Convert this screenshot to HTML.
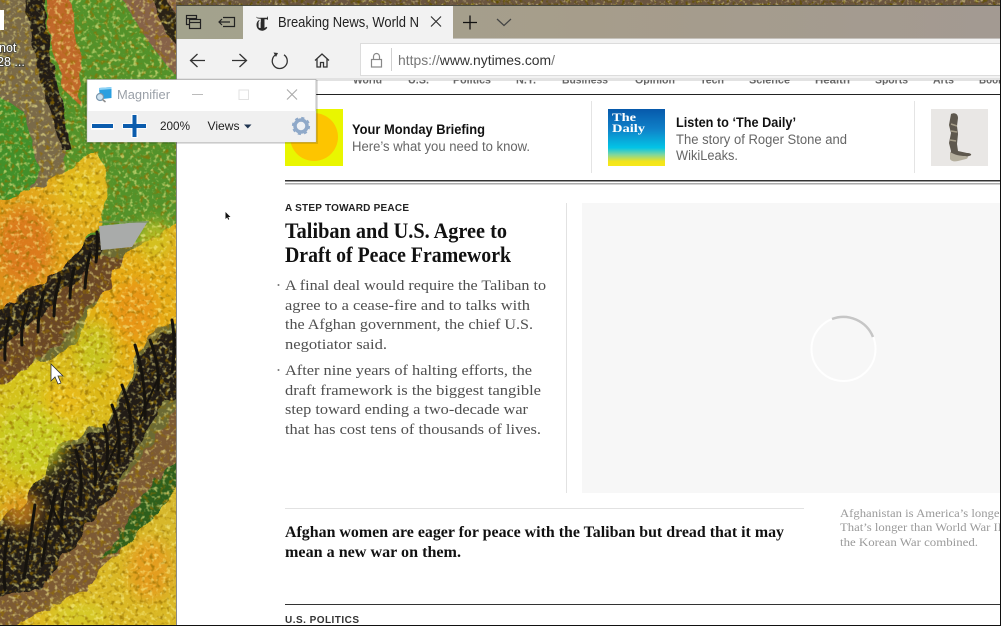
<!DOCTYPE html>
<html><head><meta charset="utf-8"><title>Magnifier</title>
<style>
html,body{margin:0;padding:0;width:1001px;height:626px;overflow:hidden;background:#fff}
svg{display:block;filter:blur(.3px)}
.s{font-family:"Liberation Sans",sans-serif}
.f{font-family:"Liberation Serif",serif}
</style></head><body>
<svg width="1001" height="626" viewBox="0 0 1001 626" xmlns="http://www.w3.org/2000/svg">
<defs>
<filter id="rough" x="-5%" y="-5%" width="110%" height="110%">
<feTurbulence type="fractalNoise" baseFrequency="0.06" numOctaves="2" seed="4" result="n"/>
<feDisplacementMap in="SourceGraphic" in2="n" scale="12"/>
</filter>
<filter id="soft" x="-20%" y="-20%" width="140%" height="140%"><feGaussianBlur stdDeviation="7"/></filter>
<filter id="dk" x="0" y="0" width="100%" height="100%">
<feTurbulence type="fractalNoise" baseFrequency="0.2" numOctaves="2" seed="8"/>
<feColorMatrix values="0 0 0 0 .3  0 0 0 0 .16  0 0 0 0 0  4 0 0 0 -2.15"/>
</filter>
<filter id="lt" x="0" y="0" width="100%" height="100%">
<feTurbulence type="fractalNoise" baseFrequency="0.24" numOctaves="2" seed="21"/>
<feColorMatrix values="0 0 0 0 1  0 0 0 0 .93  0 0 0 0 .3  0 4 0 0 -2.1"/>
</filter>
<filter id="dk2" x="0" y="0" width="100%" height="100%">
<feTurbulence type="fractalNoise" baseFrequency="0.28" numOctaves="2" seed="8"/>
<feColorMatrix values="0 0 0 0 .12  0 0 0 0 .08  0 0 0 0 0  3.6 0 0 0 -1.85"/>
</filter>
<filter id="lt2" x="0" y="0" width="100%" height="100%">
<feTurbulence type="fractalNoise" baseFrequency="0.32" numOctaves="2" seed="21"/>
<feColorMatrix values="0 0 0 0 1  0 0 0 0 .9  0 0 0 0 .35  0 3.4 0 0 -1.8"/>
</filter>
<linearGradient id="h1" x1="0" y1="1" x2="1" y2="0"><stop offset="0" stop-color="#dc8a1c"/><stop offset=".55" stop-color="#e3a51a"/><stop offset="1" stop-color="#e0bd22"/></linearGradient>
<linearGradient id="h2" x1="0" y1="1" x2="1" y2="0"><stop offset="0" stop-color="#d9b31a"/><stop offset=".35" stop-color="#d3c41e"/><stop offset=".65" stop-color="#e6ab14"/><stop offset="1" stop-color="#e3ad1e"/></linearGradient>
<linearGradient id="h3" x1="0" y1="1" x2="1" y2="0"><stop offset="0" stop-color="#e0bb1e"/><stop offset="1" stop-color="#d4b630"/></linearGradient>
<linearGradient id="tabbar" x1="0" x2="1"><stop offset="0" stop-color="#a3a38d"/><stop offset=".5" stop-color="#a69d8b"/><stop offset="1" stop-color="#a39a92"/></linearGradient>
<linearGradient id="daily" x1="0" y1="0" x2="0" y2="1"><stop offset="0" stop-color="#0759ab"/><stop offset=".35" stop-color="#0f80c8"/><stop offset=".68" stop-color="#03c4e6"/><stop offset=".8" stop-color="#7ed6a0"/><stop offset=".92" stop-color="#f2e41c"/><stop offset="1" stop-color="#f7e81a"/></linearGradient>
<clipPath id="left"><rect x="0" y="0" width="176" height="626"/></clipPath>
<clipPath id="top"><rect x="0" y="0" width="1001" height="6"/></clipPath>
<clipPath id="nav"><rect x="340" y="80" width="661" height="5"/></clipPath>
</defs>

<!-- wallpaper -->
<g clip-path="url(#left)">
<rect width="176" height="626" fill="#6b6a34"/>
<g filter="url(#rough)">
<rect x="-20" y="-20" width="220" height="260" fill="#52922c"/>
<polygon points="-20,-20 30,-20 66,150 60,215 10,215 -20,100" fill="#7a6a4a"/>
<polygon points="-20,85 22,110 38,165 26,215 -20,215" fill="#43902a"/>
<polygon points="112,-20 200,-20 200,80 172,72 140,30" fill="#86624a"/>
<polygon points="46,-20 64,-20 82,60 80,105 64,90 50,40" fill="#c0682c"/>
<polygon points="22,-20 44,-20 50,55 72,150 62,150 36,65" fill="#241c12"/>
<polygon points="143,-20 155,-20 190,40 190,60 165,32" fill="#2a2018"/>
<polygon points="-20,320 105,228 102,262 -20,375" fill="#241c12"/>
<polygon points="-20,370 100,258 135,258 60,340 -20,410" fill="#6b4628"/>
<polygon points="-20,205 30,192 98,152 110,190 100,226 60,268 20,298 -20,320" fill="url(#h1)"/>
<polygon points="-20,530 60,450 105,430 150,345 200,310 200,395 165,400 125,470 95,530 40,600 0,605 -20,605" fill="#241c12"/>
<polygon points="-20,600 40,590 130,470 200,380 200,640 -20,640" fill="#7b5a34"/>
<polygon points="100,560 145,495 200,432 200,470 140,540" fill="#2f5f1c"/>
<polygon points="-20,398 30,365 75,345 100,295 130,250 200,212 200,305 150,335 105,425 60,445 20,505 -20,540" fill="url(#h2)"/>
<polygon points="-20,640 15,626 80,590 125,548 200,470 200,640" fill="url(#h3)"/>
</g>
<!-- colour blotches -->
<g filter="url(#soft)" opacity=".75">
<ellipse cx="25" cy="245" rx="28" ry="38" fill="#d9701c"/>
<ellipse cx="80" cy="190" rx="22" ry="18" fill="#e3c41e"/>
<ellipse cx="30" cy="440" rx="35" ry="35" fill="#c2cf22"/>
<ellipse cx="95" cy="350" rx="20" ry="28" fill="#bfc922"/>
<ellipse cx="135" cy="310" rx="22" ry="30" fill="#e88f18"/>
<ellipse cx="155" cy="240" rx="18" ry="20" fill="#cfc824"/>
<ellipse cx="65" cy="400" rx="22" ry="20" fill="#ecb814"/>
<ellipse cx="20" cy="510" rx="20" ry="18" fill="#dd8c1a"/>
<ellipse cx="150" cy="570" rx="22" ry="30" fill="#e8951c"/>
<ellipse cx="80" cy="615" rx="30" ry="12" fill="#d2cf2a"/>
</g>
<rect width="176" height="626" filter="url(#dk)" opacity=".7"/>
<rect width="176" height="626" filter="url(#lt)" opacity=".55"/>
<!-- stalks -->
<g fill="none" stroke="#15120d" stroke-linecap="round" stroke-width="3">
<path d="M5 360 Q4 340 9 318M22 345 Q20 325 29 303M38 332 Q38 312 44 292M54 316 Q54 298 60 278M70 298 Q70 285 74 268M85 288 Q86 270 90 253M96 262 Q98 245 97 232"/>
<path d="M5 590 Q2 560 9 530M24 578 Q30 540 35 505M42 565 Q48 525 56 490M62 525 Q60 500 70 480M80 505 Q84 475 76 450M95 485 Q98 455 88 435M106 468 Q110 445 104 425M118 462 Q122 430 112 405M130 448 Q134 415 122 385M145 418 Q146 380 135 345M158 390 Q160 365 150 340M172 372 Q176 345 172 320"/>
<path d="M68 538 Q56 520 50 500M100 480 Q110 460 118 440M140 420 Q150 395 160 375" stroke-width="2"/>
</g>
<polygon points="99,226 148,221 132,247 101,250" fill="#a9abaa"/>
<rect x="99" y="221" width="50" height="2" fill="#6f8f50" opacity=".6"/>
<rect x="0" y="10" width="4" height="20" fill="#fff"/>
<text x="-1" y="52" class="s" font-size="12.500" fill="#fff" stroke="#123" stroke-width="2" paint-order="stroke" stroke-opacity=".45">not</text>
<text x="-3" y="66" class="s" font-size="12.500" fill="#fff" stroke="#123" stroke-width="2" paint-order="stroke" stroke-opacity=".45">28 ...</text>
<path d="M51 364 V381 L55 377 L58 384 L61 383 L58 376 L63 376 Z" fill="#fff" stroke="#333" stroke-width=".8"/>
</g>
<g clip-path="url(#top)">
<rect x="176" y="0" width="825" height="6" fill="#6a5540"/>
<rect x="176" y="0" width="825" height="6" filter="url(#dk2)"/>
<rect x="176" y="0" width="825" height="6" filter="url(#lt2)" opacity=".5"/>
</g>

<!-- browser -->
<rect x="176" y="5" width="825" height="621" fill="#fff"/>
<rect x="176" y="5" width="825" height="1" fill="#4a4a3e"/>
<rect x="176" y="6" width="825" height="33" fill="url(#tabbar)"/>
<rect x="243" y="6" width="210" height="33" fill="#f2f2f2"/>
<rect x="176" y="39" width="825" height="39" fill="#f2f2f2"/>
<rect x="453" y="38" width="548" height="1" fill="#d8d8d8" opacity=".6"/>
<rect x="360.500" y="43.500" width="641" height="32" fill="#fff" stroke="#dcdcdc"/>
<rect x="176" y="78" width="825" height="3" fill="#e2e2e2"/>
<rect x="176" y="5" width="1" height="621" fill="#555" opacity=".7"/>

<!-- tab bar icons -->
<g fill="none" stroke="#222" stroke-width="1.2">
<rect x="186.500" y="15.500" width="10" height="9"/>
<path d="M186.500 18.500H196.500"/>
<rect x="189.500" y="19.500" width="11" height="9" fill="#a3a38d"/>
<path d="M189.500 22.500H200.500"/>
<path d="M223 17.500H234.500V26.500H223M230 22H219M222 19l-3 3 3 3"/>
</g>
<g fill="#2a2a2a">
<path d="M256 16.500c1 1.500 2.500 1.200 5 1.200h6l1-1.700v4l-1.200-.8h-2.300v8.800l2-1.300.8 1c-1.400 1.800-3 3-5.300 3-3.300 0-5.500-2.600-5.500-5.800 0-2.300 1-4 2.800-5l.2.800c-.8.800-1.100 1.800-1.100 2.900l2.400-1.100v-3.800c-2.400 0-4.200 0-4.800-2.200z M260.600 22.500l-2 .9v3.800c.5.500 1.200.8 2 .8z"/>
</g>
<text x="278" y="27" class="s" font-size="14.500" fill="#222" textLength="141" lengthAdjust="spacingAndGlyphs">Breaking News, World N</text>
<rect x="419" y="10" width="10" height="24" fill="#f2f2f2"/>
<path d="M431 16.500l10 10M441 16.500l-10 10" stroke="#333" stroke-width="1.200" fill="none"/>
<path d="M470 15.500v14M463 22.500h14" stroke="#111" stroke-width="1.300" fill="none"/>
<path d="M497 19l7 6.500 7-6.500" stroke="#444" stroke-width="1.200" fill="none"/>

<!-- nav icons -->
<g fill="none" stroke="#333" stroke-width="1.300">
<path d="M205 60.500H191M197.500 54l-7 6.500 7 6.500"/>
<path d="M232 60.500H246M239.500 54l7 6.500-7 6.500"/>
<path d="M276 54.500a7.500 7.500 0 1 0 8 .3"/>
<path d="M315 60.500l7-6.500 7 6.500M317 59v8h3.500v-4.500h3V67H327v-8"/>
</g>
<path d="M273.500 52.500l4.500 .5-2 4z" fill="#333"/>
<g fill="none" stroke="#888" stroke-width="1.200">
<rect x="371.500" y="59.500" width="10" height="7.500"/>
<path d="M373.500 59.500v-3a3 3 0 0 1 6 0v3"/>
</g>
<rect x="391" y="48" width="1" height="23" fill="#d0d0d0"/>
<text x="398" y="65" class="s" font-size="14" fill="#777" textLength="157" lengthAdjust="spacingAndGlyphs">https://<tspan fill="#333">www.nytimes.com</tspan>/</text>

<!-- nav cropped text -->
<g clip-path="url(#nav)" class="s" font-size="11" font-weight="bold" fill="#666">
<text x="353" y="83.500" textLength="29" lengthAdjust="spacingAndGlyphs">World</text>
<text x="408" y="83.500" textLength="21" lengthAdjust="spacingAndGlyphs">U.S.</text>
<text x="453" y="83.500" textLength="38" lengthAdjust="spacingAndGlyphs">Politics</text>
<text x="516" y="83.500" textLength="20" lengthAdjust="spacingAndGlyphs">N.Y.</text>
<text x="562" y="83.500" textLength="46" lengthAdjust="spacingAndGlyphs">Business</text>
<text x="635" y="83.500" textLength="40" lengthAdjust="spacingAndGlyphs">Opinion</text>
<text x="700" y="83.500" textLength="24" lengthAdjust="spacingAndGlyphs">Tech</text>
<text x="749" y="83.500" textLength="41" lengthAdjust="spacingAndGlyphs">Science</text>
<text x="815" y="83.500" textLength="35" lengthAdjust="spacingAndGlyphs">Health</text>
<text x="875" y="83.500" textLength="33" lengthAdjust="spacingAndGlyphs">Sports</text>
<text x="933" y="83.500" textLength="21" lengthAdjust="spacingAndGlyphs">Arts</text>
<text x="979" y="83.500" textLength="30" lengthAdjust="spacingAndGlyphs">Books</text>
</g>

<!-- page -->
<rect x="285" y="94" width="716" height="1" fill="#222"/>
<rect x="591" y="101" width="1" height="72" fill="#e4e4e4"/>
<rect x="914" y="101" width="1" height="72" fill="#e4e4e4"/>
<rect x="285" y="109" width="58" height="57" fill="#e9f600"/>
<circle cx="314" cy="137" r="24" fill="#fdc500"/>
<text x="352" y="134" class="s" font-size="13.500" font-weight="bold" fill="#111" textLength="133" lengthAdjust="spacingAndGlyphs">Your Monday Briefing</text>
<text x="352" y="151" class="s" font-size="13.500" fill="#666" textLength="178" lengthAdjust="spacingAndGlyphs">Here’s what you need to know.</text>
<rect x="608" y="109" width="57" height="57" fill="url(#daily)"/>
<text x="612" y="121" class="f" font-size="12" font-weight="bold" fill="#fff" textLength="24" lengthAdjust="spacingAndGlyphs">The</text>
<text x="612" y="132" class="f" font-size="12" font-weight="bold" fill="#fff" textLength="33" lengthAdjust="spacingAndGlyphs">Daily</text>
<text x="676" y="127" class="s" font-size="13.500" font-weight="bold" fill="#111" textLength="120" lengthAdjust="spacingAndGlyphs">Listen to ‘The Daily’</text>
<text x="676" y="144" class="s" font-size="13.500" fill="#666" textLength="171" lengthAdjust="spacingAndGlyphs">The story of Roger Stone and</text>
<text x="676" y="160" class="s" font-size="13.500" fill="#666" textLength="62" lengthAdjust="spacingAndGlyphs">WikiLeaks.</text>
<rect x="931" y="109" width="57" height="57" fill="#e9e7e5"/>
<path d="M951 114c4-2 7 0 7 4l-1 8 1 8-1 10 1 7 9 2c4 0 6 2 2 3l-9 3c-4 1-8 1-10-2l1-6-2-8 2-10-2-8z" fill="#5e584e"/>
<path d="M950 152c5 3 10 4 15 4 3 0 4 2 1 3l-8 2c-4 1-7 0-8-2z" fill="#b5af9e"/>
<path d="M951 124l6 2M951 131l6 1M950 140l6 1" stroke="#a49c88" stroke-width="1.500"/>
<rect x="285" y="180" width="716" height="1.500" fill="#333"/>
<rect x="285" y="183" width="716" height="1.500" fill="#aaa"/>

<text x="285" y="211" class="s" font-size="10" font-weight="bold" fill="#222" textLength="124" lengthAdjust="spacing">A STEP TOWARD PEACE</text>
<text x="285" y="238" class="f" font-size="22" font-weight="bold" fill="#111" textLength="222" lengthAdjust="spacingAndGlyphs">Taliban and U.S. Agree to</text>
<text x="285" y="262" class="f" font-size="22" font-weight="bold" fill="#111" textLength="226" lengthAdjust="spacingAndGlyphs">Draft of Peace Framework</text>
<g class="f" font-size="15" fill="#4f4f4f">
<text x="285" y="290" textLength="261" lengthAdjust="spacingAndGlyphs">A final deal would require the Taliban to</text>
<text x="285" y="310" textLength="245" lengthAdjust="spacingAndGlyphs">agree to a cease-fire and to talks with</text>
<text x="285" y="329" textLength="248" lengthAdjust="spacingAndGlyphs">the Afghan government, the chief U.S.</text>
<text x="285" y="349" textLength="102" lengthAdjust="spacingAndGlyphs">negotiator said.</text>
<text x="285" y="375" textLength="247" lengthAdjust="spacingAndGlyphs">After nine years of halting efforts, the</text>
<text x="285" y="395" textLength="256" lengthAdjust="spacingAndGlyphs">draft framework is the biggest tangible</text>
<text x="285" y="414" textLength="243" lengthAdjust="spacingAndGlyphs">step toward ending a two-decade war</text>
<text x="285" y="434" textLength="256" lengthAdjust="spacingAndGlyphs">that has cost tens of thousands of lives.</text>
</g>
<circle cx="278.500" cy="285" r="1" fill="#777"/>
<circle cx="278.500" cy="370" r="1" fill="#777"/>
<rect x="566" y="203" width="1" height="290" fill="#e2e2e2"/>
<rect x="582" y="203" width="419" height="290" fill="#f7f7f7"/>
<circle cx="843.500" cy="349" r="32" fill="none" stroke="#fff" stroke-width="2"/>
<path d="M832 319a32 32 0 0 1 41 18" fill="none" stroke="#c6c6c6" stroke-width="2.500"/>
<rect x="285" y="508" width="519" height="1" fill="#e2e2e2"/>
<text x="285" y="537" class="f" font-size="16" font-weight="bold" fill="#111" textLength="499" lengthAdjust="spacingAndGlyphs">Afghan women are eager for peace with the Taliban but dread that it may</text>
<text x="285" y="557" class="f" font-size="16" font-weight="bold" fill="#111" textLength="176" lengthAdjust="spacingAndGlyphs">mean a new war on them.</text>
<g class="f" font-size="11.500" fill="#9a9a9a">
<text x="840" y="517" textLength="168" lengthAdjust="spacingAndGlyphs">Afghanistan is America’s longest</text>
<text x="840" y="531" textLength="162" lengthAdjust="spacingAndGlyphs">That’s longer than World War II</text>
<text x="840" y="546" textLength="138" lengthAdjust="spacingAndGlyphs">the Korean War combined.</text>
</g>
<rect x="285" y="604" width="716" height="1" fill="#333"/>
<text x="285" y="623" class="s" font-size="10" font-weight="bold" fill="#333" textLength="74" lengthAdjust="spacing">U.S. POLITICS</text>
<path d="M225.500 212v7l1.700-1.600 1 2.300 1-.4-1-2.300h2.300z" fill="#111"/>

<!-- magnifier -->
<rect x="85" y="80" width="233" height="64" fill="#000" opacity=".12"/>
<rect x="87" y="79.500" width="229" height="62.500" fill="#fff" stroke="#999" stroke-width=".6"/>
<rect x="87.300" y="111" width="228.500" height="31" fill="#f0f0f0"/>
<path d="M99 88l12.500-1v11l-9 1-1 2-1.500-2z" fill="#2a9fe0"/>
<path d="M99 88l12.500-1v2l-12 1z" fill="#8fd3f5"/>
<circle cx="100" cy="97" r="3.500" fill="#cfe2ef" stroke="#7b97ad" stroke-width="1.200"/>
<path d="M102.500 99.500l3 2.500" stroke="#8a8a8a" stroke-width="1.500"/>
<text x="117" y="99" class="s" font-size="12.500" fill="#9aa0a8" textLength="53" lengthAdjust="spacingAndGlyphs">Magnifier</text>
<rect x="192" y="94" width="11" height="1" fill="#bbb"/>
<rect x="239" y="90" width="9.500" height="9.500" fill="#fff" stroke="#e2e2e2"/>
<path d="M287 89.500l10 10M297 89.500l-10 10" stroke="#aaa" stroke-width="1.100" fill="none"/>
<rect x="92" y="124" width="21" height="5" fill="#fff" stroke="#fff" stroke-width="1.500"/>
<rect x="92" y="124" width="21" height="4" fill="#0b5cad"/>
<path d="M123 124h9v-9h5v9h9v4h-9v9h-5v-9h-9z" fill="#fff" stroke="#fff" stroke-width="1.500"/>
<path d="M123 124h9.500v-9h4v9h9.500v4h-9.500v9h-4v-9h-9.500z" fill="#0b5cad"/>
<text x="160" y="130" class="s" font-size="12" fill="#222" textLength="30" lengthAdjust="spacingAndGlyphs">200%</text>
<text x="207.500" y="130" class="s" font-size="12" fill="#222" textLength="32" lengthAdjust="spacingAndGlyphs">Views</text>
<path d="M244 124.500h7.500l-3.700 4z" fill="#1f3551"/>
<g transform="translate(301 126)">
<circle r="6" fill="none" stroke="#8fa9c9" stroke-width="3.500"/>
<circle r="8.200" fill="none" stroke="#8fa9c9" stroke-width="1.800" stroke-dasharray="3.200 3.240"/>
<circle r="3.800" fill="#eef1f5"/>
</g>

<rect x="1000" y="0" width="1" height="626" fill="#111"/>
<rect x="0" y="625" width="1001" height="1" fill="#111"/>
</svg>
</body></html>
